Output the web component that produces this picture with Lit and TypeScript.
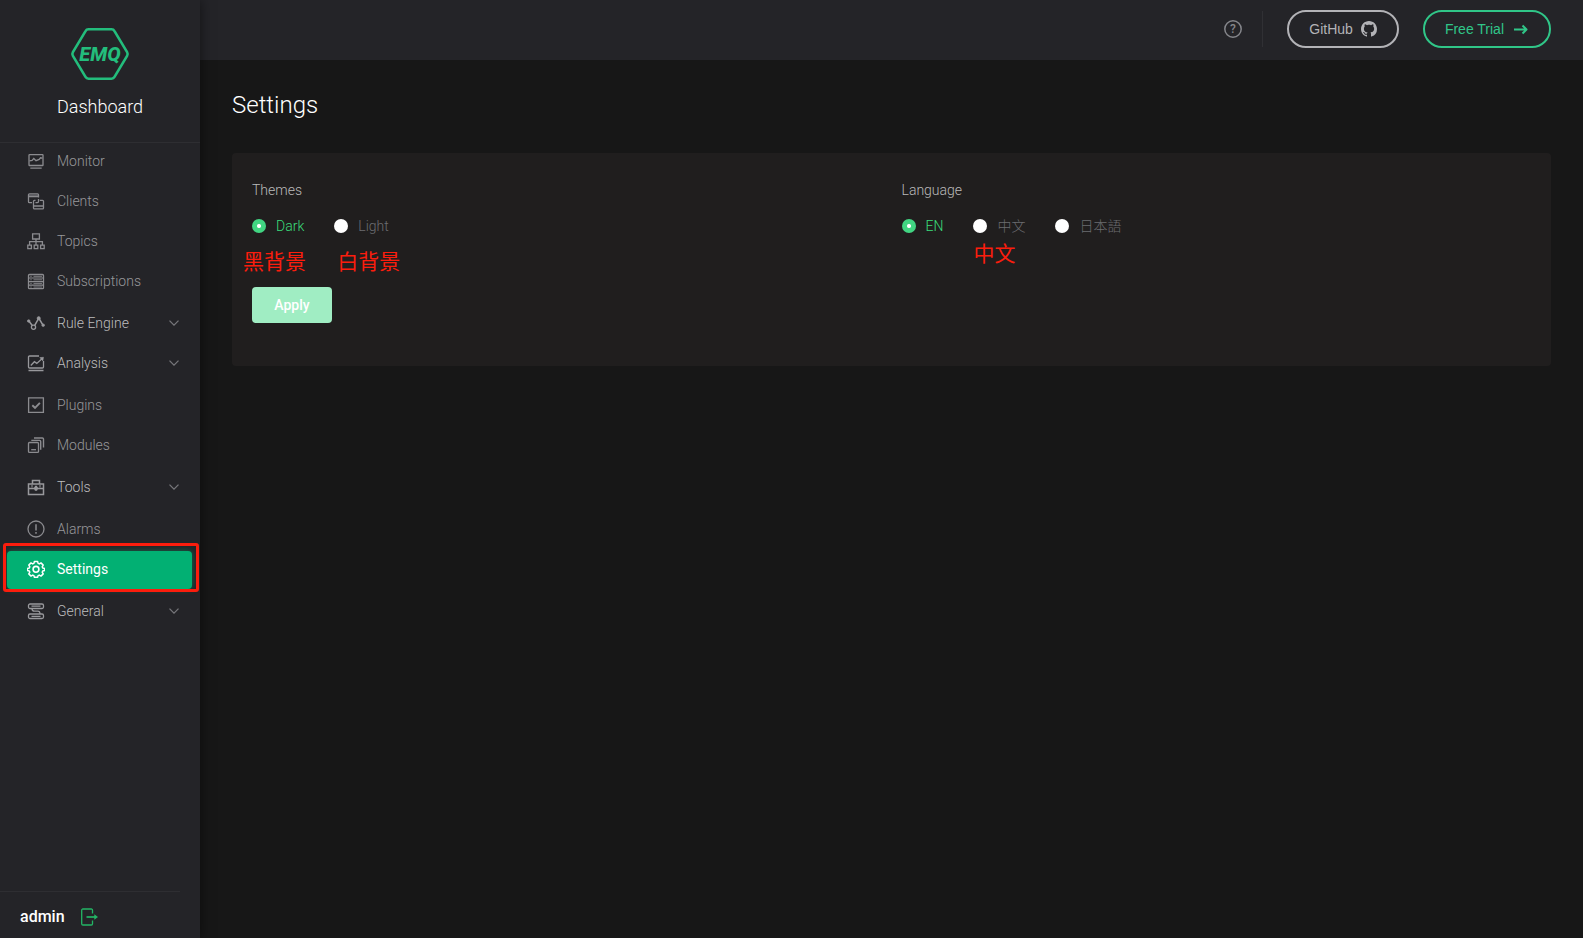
import { LitElement, html, svg, css, nothing } from "lit";
import { customElement, property, state } from "lit/decorators.js";

const icons = {
  monitor: svg`<rect x="2" y="1.700" width="14" height="10.800" rx=".6"/><path d="M2.500 7.800l2.600-.3 1.700-2 2.200 2.200 3.200-1.300 1.300-1.600 2 .4M3.300 15.200h11.400"/>`,
  clients: svg`<path d="M5 9.700H2.400a.9.900 0 0 1-.9-.9V1.700c0-.5.4-.9.9-.9h8.200c.5 0 .9.400.9.900v2.800M1.500 3.600h10"/><path d="M1.500 2.400h10" opacity=".6"/><path d="M8.500 7.300H7.400c-.5 0-.9.400-.9.900v6.700c0 .5.4.9.9.9h8.200c.5 0 .9-.4.900-.9V8.200c0-.5-.4-.9-.9-.9h-2.800M6.500 13h10M11.500 6v2.600c0 .6-.5 1.100-1.100 1.100H8.500"/>`,
  topics: svg`<path d="M5.600.8h6.800v5.200H5.600zM9 6v6M2.600 12V8.600h12.800V12"/><path d="M.8 12.200h3.600v3.400H.8zM7.200 12.200h3.600v3.400H7.200zM13.600 12.200h3.600v3.400h-3.600z"/>`,
  subscriptions: svg`<rect x="1.500" y="1.500" width="15" height="14.200" rx="1"/><path d="M2 5h14M2 8.600h14M2 12.200h14" stroke-width="1.200"/><path d="M3.300 3.300h1.400M3.300 6.800h1.400M3.300 10.400h1.400M3.300 14h1.400M6.500 3.300h8.500M6.500 6.800h8.500M6.500 10.400h8.500M6.500 14h8.500" stroke-width=".9"/>`,
  rule: svg`<path d="M2 6.300l3.300 4.200M7.700 10.300l3.700-6.500M12.300 4l3.500 5.800" stroke-width="1.500"/><circle cx="1.700" cy="6" r="1.300" fill="currentColor" stroke-width=".6"/><circle cx="6.500" cy="12.300" r="2.100"/><circle cx="11.700" cy="3.200" r="1.600" fill="currentColor" stroke-width=".6"/><circle cx="16.200" cy="10.200" r="1.300" fill="currentColor" stroke-width=".6"/>`,
  analysis: svg`<path d="M12 1H2.600C2 1 1.500 1.500 1.500 2.100v9.800c0 .6.5 1.100 1.100 1.100h12.800c.6 0 1.100-.5 1.100-1.100V6M1.500 15.500h15"/><path d="M3.800 10.500l3.600-3.800 2.400 1.700 5.700-5.100"/><path d="M12.800 2.600l3.700-.3-.6 3.600z" fill="currentColor" stroke-width=".5"/>`,
  plugins: svg`<path d="M1.600.8h14.800v14.600H1.600z" stroke-width="1.300"/><path d="M5.300 8.200l2.700 2.600 4.900-5" stroke-width="1.900"/>`,
  modules: svg`<rect x="1.500" y="5.500" width="10" height="9.900" rx="1"/><path d="M4.200 12.700h4.800"/><path d="M4.300 3.400h8.300c.6 0 1.100.5 1.100 1.100v8.200M7 1h8.400c.6 0 1.100.5 1.100 1.100v8.300" stroke-width="1.400"/>`,
  tools: svg`<path d="M1.500 5h15v10.400h-15zM5.500 4.800V1.500h7v3.300M1.500 9.400h15" stroke-width="1.500"/><path d="M9 6.800v5M7 9.400h4" stroke-width="2.400"/><path d="M5 6v2.500M13 6v2.500" stroke-width="1"/>`,
  alarms: svg`<circle cx="9" cy="8" r="8"/><path d="M9 3.300v6.300" stroke-width="1.500"/><path d="M9 11.100v1.700" stroke-width="1.500"/>`,
  settings: svg`<path d="M7.400.5h3.200l.5 1.900 1.200.5 1.700-1 2.200 2.200-1 1.700.5 1.200 1.900.5v2l-1.900.5-.5 1.200 1 1.700-2.200 2.200-1.700-1-1.200.5-.5 1.700H7.400l-.5-1.700-1.200-.5-1.700 1-2.200-2.200 1-1.700-.5-1.200-1.900-.5v-2l1.900-.5.5-1.200-1-1.700L4 1.900l1.700 1 1.200-.5z" stroke-width="1.500" stroke-linejoin="round"/><circle cx="9" cy="8.300" r="2.900" stroke-width="1.600"/>`,
  general: svg`<rect x="1.500" y="1" width="15" height="4.500" rx="1.500"/><rect x="1.500" y="11" width="15" height="4.500" rx="1.500"/><path d="M4.500 3.200h9M4.500 13.300h9M5 5.500c0 2 .8 2.700 2.400 2.700h3.400c1.500 0 2.200.8 2.200 2.800"/>`,
};

type IconName = keyof typeof icons;
interface Item {
  icon: IconName;
  label: string;
  sub?: boolean;
}

const groups: Item[][] = [
  [
    { icon: "monitor", label: "Monitor" },
    { icon: "clients", label: "Clients" },
    { icon: "topics", label: "Topics" },
    { icon: "subscriptions", label: "Subscriptions" },
  ],
  [
    { icon: "rule", label: "Rule Engine", sub: true },
    { icon: "analysis", label: "Analysis", sub: true },
  ],
  [
    { icon: "plugins", label: "Plugins" },
    { icon: "modules", label: "Modules" },
  ],
  [{ icon: "tools", label: "Tools", sub: true }],
  [
    { icon: "alarms", label: "Alarms" },
    { icon: "settings", label: "Settings" },
  ],
  [{ icon: "general", label: "General", sub: true }],
];

@customElement("side-bar")
class SideBar extends LitElement {
  @property() active = "";

  static styles = css`
    :host {
      display: flex;
      flex-direction: column;
      background: #242428;
      box-shadow: 0 0 12px rgba(0, 0, 0, 0.5);
      z-index: 1;
    }
    .brand {
      display: flex;
      flex-direction: column;
      align-items: center;
      gap: 14px;
      padding: 27px 0 23px;
      border-bottom: 1px solid #2e2e32;
      color: #fff;
      font-size: 18px;
      font-weight: 300;
      line-height: 24px;
    }
    .logo {
      display: block;
      width: 60px;
      height: 54px;
    }
    .logo text {
      font: italic 800 20px Roboto, sans-serif;
      fill: #23bd7c;
    }
    nav {
      flex: 1;
      display: flex;
      flex-direction: column;
      gap: 4px;
    }
    ul {
      display: flex;
      flex-direction: column;
      gap: 2px;
      margin: 0;
      padding: 0 7px;
      list-style: none;
    }
    .item {
      display: flex;
      align-items: center;
      gap: 12px;
      box-sizing: border-box;
      width: 100%;
      height: 38px;
      padding: 0 14px 2px 20px;
      border: 0;
      border-radius: 4px;
      background: none;
      color: #97979a;
      font: 300 14px/20px Roboto, sans-serif;
      text-align: left;
      text-decoration: none;
    }
    .item.sub {
      color: #bcbcbe;
    }
    .item svg {
      display: block;
      width: 18px;
      height: 18px;
      fill: none;
      stroke: #8b8b8f;
      color: #8b8b8f;
      stroke-width: 1.3;
      flex: none;
    }
    .item.sub svg {
      stroke: #98989c;
      color: #98989c;
    }
    .label {
      flex: 1;
    }
    .item.sub .chevron {
      width: 10px;
      height: 6px;
      stroke: #77777b;
    }
    .item.active {
      background: #02b073;
      color: #fff;
      font-weight: 400;
      box-shadow: 0 0 6px rgba(2, 176, 115, 0.5);
    }
    .item.active svg {
      stroke: #fff;
    }
    .marked {
      position: relative;
      margin-right: 1px;
    }
    .marked::after {
      content: "";
      position: absolute;
      inset: -8px -7px -3px -4px;
      border: 3px solid #fb1d0d;
      border-radius: 3px;
      pointer-events: none;
    }
    .user {
      display: flex;
      align-items: center;
      gap: 16px;
      height: 47px;
      margin-right: 20px;
      padding: 3px 0 0 20px;
      box-sizing: border-box;
      border-top: 1px solid #2e2e32;
      color: #fff;
      font-size: 16px;
      font-weight: 500;
    }
    .logout {
      padding: 0;
      border: 0;
      background: none;
      color: #23b565;
    }
    .logout svg {
      display: block;
      width: 18px;
      height: 18px;
      fill: none;
      stroke: currentColor;
      stroke-width: 1.3;
    }
  `;

  private renderItem(item: Item) {
    const icon = html`<svg viewBox="0 -1 18 18" aria-hidden="true">${icons[item.icon]}</svg>`;
    if (item.sub) {
      return html`<li>
        <button class="item sub" type="button">
          ${icon}<span class="label">${item.label}</span>
          <svg class="chevron" viewBox="0 0 10 6" aria-hidden="true"><path d="M.5.6L5 5.100 9.500.6" /></svg>
        </button>
      </li>`;
    }
    const active = item.label === this.active;
    return html`<li class=${active ? "marked" : nothing}>
      <a class="item ${active ? "active" : ""}" href="#${item.icon}">${icon}<span class="label">${item.label}</span></a>
    </li>`;
  }

  render() {
    return html`
      <div class="brand">
        <svg class="logo" viewBox="0 0 60 54" aria-hidden="true">
          <path d="M18.500 2.300h23q2 0 3 1.800l12.600 21q1.100 1.900 0 3.800l-12.600 21q-1 1.800-3 1.800h-23q-2 0-3-1.800l-12.600-21q-1.100-1.900 0-3.800l12.600-21q1-1.800 3-1.800z" fill="none" stroke="#23bd7c" stroke-width="2.600" />
          <text x="30" y="34" text-anchor="middle">EMQ</text>
        </svg>
        <span>Dashboard</span>
      </div>
      <nav>${groups.map((g) => html`<ul>${g.map((i) => this.renderItem(i))}</ul>`)}</nav>
      <div class="user">
        <span>admin</span>
        <button class="logout" type="button" aria-label="Log out">
          <svg viewBox="0 0 18 18" aria-hidden="true">
            <path d="M11.500 5.500V2.200c0-.7-.5-1.200-1.200-1.200H1.900C1.200 1 .7 1.500.7 2.200v13.600c0 .7.5 1.200 1.200 1.200h8.400c.7 0 1.200-.5 1.200-1.200v-3.300" />
            <path d="M5.500 9h9" stroke-width="1.700" /><path d="M13.300 6.200L17 9l-3.700 2.800z" fill="currentColor" stroke="none" />
          </svg>
        </button>
      </div>
    `;
  }
}

@customElement("top-bar")
class TopBar extends LitElement {
  static styles = css`
    :host {
      display: flex;
      align-items: center;
      justify-content: flex-end;
      gap: 24px;
      box-sizing: border-box;
      height: 60px;
      padding: 0 32px 2px;
      background: #242428;
      font-family: "Liberation Sans", sans-serif;
      font-size: 14px;
    }
    .help {
      display: flex;
      align-items: center;
      height: 36px;
      padding-right: 20px;
      border-right: 1px solid #303034;
      color: #85868b;
    }
    .help svg {
      display: block;
      width: 18px;
      height: 18px;
    }
    .help text {
      font: 500 12px Roboto, sans-serif;
      fill: currentColor;
    }
    .pill {
      display: flex;
      align-items: center;
      gap: 8px;
      box-sizing: border-box;
      height: 38px;
      padding: 0 20px;
      border: 2px solid currentColor;
      border-radius: 19px;
      color: #b3b3b7;
      text-decoration: none;
    }
    .pill.trial {
      color: #30c688;
    }
    .pill svg {
      display: block;
      width: 16px;
      height: 16px;
    }
    .pill.trial svg {
      width: 17px;
      height: 17px;
    }
  `;

  render() {
    return html`
      <a class="help" href="#help" aria-label="Help">
        <svg viewBox="0 0 18 18" aria-hidden="true">
          <circle cx="9" cy="9" r="8.200" fill="none" stroke="currentColor" stroke-width="1.500" />
          <text x="9" y="13.200" text-anchor="middle">?</text>
        </svg>
      </a>
      <a class="pill" href="#github">
        <span>GitHub</span>
        <svg viewBox="0 0 16 16" aria-hidden="true">
          <path fill="currentColor" d="M8 0C3.580 0 0 3.580 0 8c0 3.540 2.290 6.530 5.470 7.590.4.070.55-.17.55-.38 0-.19-.01-.82-.01-1.490-2.010.37-2.530-.49-2.690-.94-.09-.23-.48-.94-.82-1.130-.28-.15-.68-.52-.01-.53.63-.01 1.080.58 1.230.82.72 1.210 1.870.87 2.330.66.07-.52.28-.87.51-1.070-1.780-.2-3.640-.89-3.640-3.950 0-.87.31-1.590.82-2.150-.08-.2-.36-1.020.08-2.120 0 0 .67-.21 2.200.82.64-.18 1.320-.27 2-.27s1.360.09 2 .27c1.530-1.040 2.200-.82 2.200-.82.44 1.100.16 1.920.08 2.120.51.56.82 1.270.82 2.150 0 3.070-1.870 3.750-3.650 3.950.29.25.54.73.54 1.480 0 1.070-.01 1.930-.01 2.200 0 .21.15.46.55.38A8.010 8.010 0 0 0 16 8c0-4.420-3.580-8-8-8z" />
        </svg>
      </a>
      <a class="pill trial" href="#trial">
        <span>Free Trial</span>
        <svg viewBox="0 0 17 17" aria-hidden="true">
          <path d="M2 8.500h12.500M10.500 4.500l4 4-4 4" fill="none" stroke="currentColor" stroke-width="2" stroke-linejoin="round" />
        </svg>
      </a>
    `;
  }
}

@customElement("app-root")
class AppRoot extends LitElement {
  @state() private theme = "Dark";
  @state() private language = "EN";

  static styles = css`
    :host {
      display: grid;
      grid-template-columns: 200px 1fr;
      min-height: 100vh;
      background: #171717;
      font-family: Roboto, "Noto Sans CJK SC", sans-serif;
      font-size: 14px;
      line-height: 20px;
    }
    .page {
      padding: 0 32px;
    }
    h1 {
      margin: 29px 0 32px;
      color: #fff;
      font-size: 24px;
      font-weight: 300;
      line-height: 32px;
    }
    form {
      display: grid;
      grid-template-columns: 1fr 1fr;
      column-gap: 20px;
      padding: 27px 20px 43px;
      border-radius: 4px;
      background: #201e1e;
    }
    fieldset {
      min-width: 0;
      margin: 0;
      padding: 0;
      border: 0;
    }
    legend {
      padding: 0;
      margin-bottom: 16px;
      color: #bababa;
      font-weight: 300;
    }
    .options {
      display: flex;
      gap: 30px;
    }
    .option {
      position: relative;
      display: flex;
      align-items: center;
      gap: 10px;
      color: #6c6d71;
      font-weight: 300;
    }
    .option.on {
      color: #3bdc7b;
    }
    .option input {
      appearance: none;
      width: 14px;
      height: 14px;
      margin: 0;
      border-radius: 50%;
      background: #fff;
    }
    .option input:checked {
      background: radial-gradient(circle, #fff 1.5px, #41d582 2.5px);
    }
    .note {
      position: absolute;
      top: 30px;
      left: -9px;
      color: #fb1d0d;
      font: 400 21px/28px "Noto Sans CJK SC", sans-serif;
      white-space: nowrap;
    }
    .note.light {
      left: 3px;
    }
    .note.zh {
      top: 22px;
      left: 0;
    }
    .apply {
      grid-column: 1;
      justify-self: start;
      width: 80px;
      height: 36px;
      margin-top: 51px;
      border: 0;
      border-radius: 4px;
      background: #a0edc3;
      color: #fff;
      font: 500 14px/20px Roboto, sans-serif;
    }
  `;

  private option(name: "theme" | "language", value: string, note = "", noteClass = "") {
    const on = this[name] === value;
    return html`<label class="option ${on ? "on" : ""}">
      <input type="radio" name=${name} .checked=${on} @change=${() => (this[name] = value)} />
      <span>${value}</span>
      ${note ? html`<span class="note ${noteClass}">${note}</span>` : nothing}
    </label>`;
  }

  render() {
    return html`
      <side-bar active="Settings"></side-bar>
      <div>
        <top-bar></top-bar>
        <main class="page">
          <h1>Settings</h1>
          <form @submit=${(e: Event) => e.preventDefault()}>
            <fieldset>
              <legend>Themes</legend>
              <div class="options">
                ${this.option("theme", "Dark", "黑背景")} ${this.option("theme", "Light", "白背景", "light")}
              </div>
            </fieldset>
            <fieldset>
              <legend>Language</legend>
              <div class="options">
                ${this.option("language", "EN")} ${this.option("language", "中文", "中文", "zh")}
                ${this.option("language", "日本語")}
              </div>
            </fieldset>
            <button class="apply">Apply</button>
          </form>
        </main>
      </div>
    `;
  }
}
